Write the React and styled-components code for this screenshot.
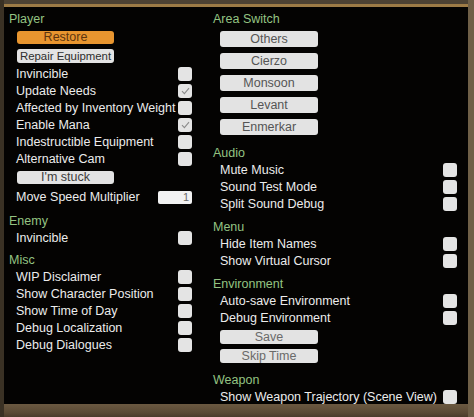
import React from 'react';
import styled, { createGlobalStyle } from 'styled-components';

const player = [
  { label: 'Invincible' },
  { label: 'Update Needs', checked: true },
  { label: 'Affected by Inventory Weight' },
  { label: 'Enable Mana', checked: true },
  { label: 'Indestructible Equipment' },
  { label: 'Alternative Cam' },
];

const misc = ['WIP Disclaimer', 'Show Character Position', 'Show Time of Day', 'Debug Localization', 'Debug Dialogues'];
const areas = ['Others', 'Cierzo', 'Monsoon', 'Levant', 'Enmerkar'];

const Check = ({ checked }) => (
  <Box>
    {checked ? (
      <svg width="9" height="8" viewBox="0 0 9 8">
        <path d="M1 4.2 L3.4 6.6 L8 1.2" fill="none" stroke="#8c8c8c" strokeWidth="1.1" />
      </svg>
    ) : null}
  </Box>
);

const ToggleRow = ({ label, checked }) => (
  <Row>
    <Label>{label}</Label>
    <Check checked={checked} />
  </Row>
);

const App = () => (
  <>
    <GlobalStyle />
    <Frame>
      <Panel>
        <Column>
          <Section>
            <Header>Player</Header>
            <Button $variant="orange" $mt={3.5} $h={13}>Restore</Button>
            <Button $mt={5} $h={14} $size={11.4} $color="#2e2e2e">Repair Equipment</Button>
            <Rows $mt={2.5}>
              {player.map((item) => <ToggleRow key={item.label} {...item} />)}
            </Rows>
            <Button $mt={3.5} $h={13} $color="#3c3c3c">I'm stuck</Button>
            <Row $mt={4.5}>
              <Label>Move Speed Multiplier</Label>
              <NumberField>1</NumberField>
            </Row>
          </Section>
          <Section $gap={7}>
            <Header>Enemy</Header>
            <ToggleRow label="Invincible" />
          </Section>
          <Section $gap={5}>
            <Header>Misc</Header>
            {misc.map((label) => <ToggleRow key={label} label={label} />)}
          </Section>
        </Column>
        <Column>
          <Section>
            <Header>Area Switch</Header>
            <ButtonList $mt={3.5}>
              {areas.map((area) => <Button key={area} $wide $h={16}>{area}</Button>)}
            </ButtonList>
          </Section>
          <Section $gap={9.5}>
            <Header>Audio</Header>
            <ToggleRow label="Mute Music" />
            <ToggleRow label="Sound Test Mode" />
            <ToggleRow label="Split Sound Debug" />
          </Section>
          <Section $gap={6}>
            <Header>Menu</Header>
            <ToggleRow label="Hide Item Names" />
            <ToggleRow label="Show Virtual Cursor" />
          </Section>
          <Section $gap={6}>
            <Header>Environment</Header>
            <ToggleRow label="Auto-save Environment" />
            <ToggleRow label="Debug Environment" />
            <Button $wide $mt={3.5} $h={14} $color="#6a6a6a">Save</Button>
            <Button $wide $mt={5} $h={14} $color="#6a6a6a">Skip Time</Button>
          </Section>
          <Section $gap={8.5}>
            <Header>Weapon</Header>
            <ToggleRow label="Show Weapon Trajectory (Scene View)" />
          </Section>
        </Column>
      </Panel>
    </Frame>
  </>
);

export default App;

const GlobalStyle = createGlobalStyle`
  html, body {
    margin: 0;
    padding: 0;
    background: #000;
  }
  body {
    font-family: "Liberation Sans", Arial, sans-serif;
  }
`;

const Frame = styled.div`
  width: 474px;
  height: 417px;
  box-sizing: border-box;
  padding: 4px 6px 13px 4px;
  display: flex;
  background:
    linear-gradient(90deg, #3a3124 0px, #3a3124 4px, transparent 4px, transparent 468px, #6f5f47 468px),
    linear-gradient(180deg, #4d4233 0px, #4d4233 4px, #3e3326 20%, #3e3326 96%, #6a5840 97%, #5a4934 99%, #4a3b2a 100%);
`;

const Panel = styled.div`
  flex: 1;
  border-top: 3px solid #9d7b46;
  background: #040302;
  display: grid;
  grid-template-columns: 184px 245px;
  column-gap: 20px;
  align-items: start;
  padding: 3.5px 0 0 5px;
  overflow: hidden;
`;

const Column = styled.div`
  display: flex;
  flex-direction: column;
`;

const Section = styled.div`
  display: flex;
  flex-direction: column;
  margin-top: ${(p) => p.$gap || 0}px;
`;

const Header = styled.div`
  height: 17px;
  line-height: 17px;
  font-size: 12.5px;
  color: #94c483;
`;

const Rows = styled.div`
  display: flex;
  flex-direction: column;
  margin-top: ${(p) => p.$mt || 0}px;
`;

const Row = styled.div`
  height: 17px;
  display: flex;
  align-items: center;
  justify-content: space-between;
  padding-left: 7px;
  margin-top: ${(p) => p.$mt || 0}px;
`;

const Label = styled.span`
  flex: 1;
  min-width: 0;
  white-space: nowrap;
  font-size: 12.5px;
  color: #ececec;
`;

const Box = styled.div`
  position: relative;
  flex: none;
  width: 14px;
  height: 14px;
  margin-right: 1px;
  border-radius: 3px;
  background: #e4e4e4;
  display: flex;
  align-items: center;
  justify-content: center;
`;

const NumberField = styled.div`
  flex: none;
  width: 34px;
  height: 13px;
  margin-right: 1px;
  border-radius: 2px;
  background: #f2f2f2;
  color: #6a6a6a;
  font-size: 11px;
  line-height: 13px;
  text-align: right;
  padding-right: 3px;
  box-sizing: border-box;
`;

const ButtonList = styled.div`
  display: flex;
  flex-direction: column;
  gap: 6px;
  margin-top: ${(p) => p.$mt || 0}px;
`;

const Button = styled.div`
  box-sizing: border-box;
  width: ${(p) => (p.$wide ? 98 : 97)}px;
  height: ${(p) => p.$h}px;
  margin-left: ${(p) => (p.$wide ? 7 : 8)}px;
  margin-top: ${(p) => p.$mt || 0}px;
  border-radius: 3px;
  background: ${(p) => (p.$variant === 'orange' ? '#e8952f' : '#e3e3e3')};
  color: ${(p) => p.$color || (p.$variant === 'orange' ? '#5e3510' : '#555')};
  font-size: ${(p) => p.$size || 12.5}px;
  line-height: ${(p) => p.$h}px;
  text-align: center;
  white-space: nowrap;
  overflow: hidden;
`;
